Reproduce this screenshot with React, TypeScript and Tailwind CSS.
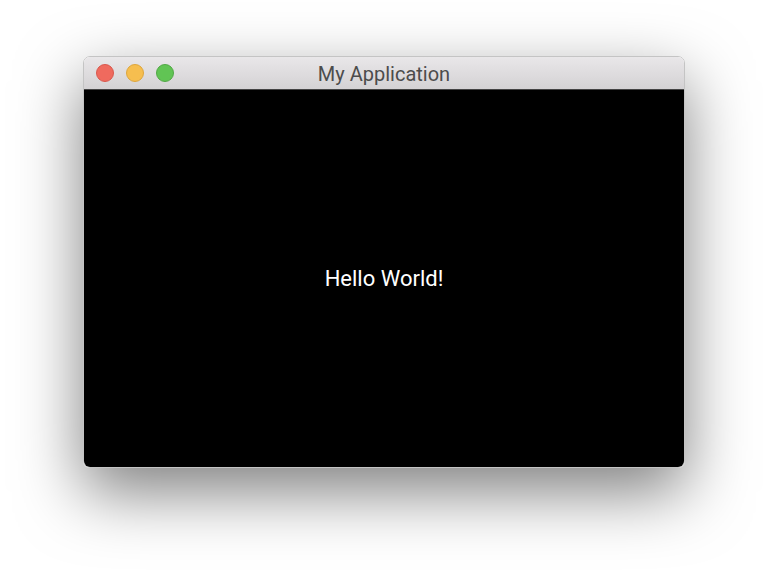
import React from 'react';

const TrafficLights = () => {
  const lights = [
    { bg: 'bg-[#ef6a5e]', border: 'border-[#d9574c]' },
    { bg: 'bg-[#f6be4f]', border: 'border-[#dea63c]' },
    { bg: 'bg-[#61c454]', border: 'border-[#51a845]' },
  ];

  return (
    <div className="absolute left-[12px] top-0 flex h-full items-center gap-[12px]">
      {lights.map((light, index) => (
        <span
          key={index}
          className={`block h-[18px] w-[18px] rounded-full border ${light.bg} ${light.border}`}
        />
      ))}
    </div>
  );
};

const App = () => {
  return (
    <div className="flex h-[579px] w-[768px] justify-center overflow-hidden bg-white pt-[56px] font-['Roboto',_'Liberation_Sans',_sans-serif]">
      <div className="flex h-[412px] w-[602px] flex-col overflow-hidden rounded-[7px] border border-[#c4c4c4] shadow-[0_24px_65px_0_rgba(0,0,0,0.5)]">
        {/* Title bar */}
        <div className="relative flex h-[33px] shrink-0 items-center justify-center border-b border-[#444] bg-gradient-to-b from-[#e9e7e9] to-[#d4d2d4]">
          <TrafficLights />
          <span className="pt-px text-[20px] text-[#4c4c4c]">My Application</span>
        </div>

        {/* Content */}
        <div className="flex flex-1 items-center justify-center bg-black">
          <span className="text-[22px] text-white">Hello World!</span>
        </div>
      </div>
    </div>
  );
};

export default App;
